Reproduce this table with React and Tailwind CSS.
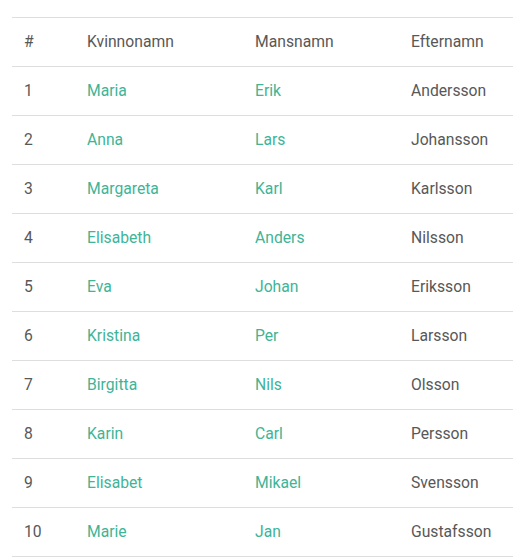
const rows = [
  ['1', 'Maria', 'Erik', 'Andersson'],
  ['2', 'Anna', 'Lars', 'Johansson'],
  ['3', 'Margareta', 'Karl', 'Karlsson'],
  ['4', 'Elisabeth', 'Anders', 'Nilsson'],
  ['5', 'Eva', 'Johan', 'Eriksson'],
  ['6', 'Kristina', 'Per', 'Larsson'],
  ['7', 'Birgitta', 'Nils', 'Olsson'],
  ['8', 'Karin', 'Carl', 'Persson'],
  ['9', 'Elisabet', 'Mikael', 'Svensson'],
  ['10', 'Marie', 'Jan', 'Gustafsson'],
];

const App = () => {
  return (
    <div className="bg-white pt-[17px] pl-3 font-['Roboto',sans-serif] text-[15.7px] text-[#585858]">
      <table className="w-[501px] table-fixed border-collapse">
        <colgroup>
          <col className="w-[63px]" />
          <col className="w-[168px]" />
          <col className="w-[156px]" />
          <col className="w-[114px]" />
        </colgroup>
        <thead>
          <tr className="h-[49px] border-y border-[#dedede]">
            <th className="px-3 text-left font-normal">#</th>
            <th className="px-3 text-left font-normal">Kvinnonamn</th>
            <th className="px-3 text-left font-normal">Mansnamn</th>
            <th className="px-3 text-left font-normal">Efternamn</th>
          </tr>
        </thead>
        <tbody>
          {rows.map((r) => (
            <tr key={r[0]} className="h-[49px] border-b border-[#dedede]">
              <td className="px-3">{r[0]}</td>
              <td className="px-3 text-[#40b497]">{r[1]}</td>
              <td className="px-3 text-[#40b497]">{r[2]}</td>
              <td className="px-3">{r[3]}</td>
            </tr>
          ))}
        </tbody>
      </table>
    </div>
  );
};

export default App;
